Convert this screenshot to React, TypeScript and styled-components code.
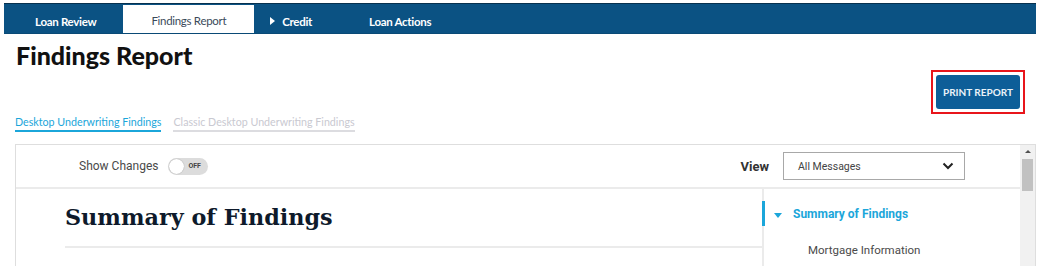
import React from 'react';
import styled, { createGlobalStyle } from 'styled-components';

const GlobalStyle = createGlobalStyle`
  html, body {
    margin: 0;
    padding: 0;
    background: #ffffff;
    height: 266px;
    overflow: hidden;
  }
  * {
    box-sizing: border-box;
  }
`;

const Page = styled.div`
  padding: 3px 7px 0 4px;
  font-family: Lato, 'Open Sans', sans-serif;
`;

const NavBar = styled.nav`
  display: flex;
  align-items: flex-end;
  height: 31px;
  background-color: #0b5283;
  border-top: 1px solid #07314f;
  border-bottom: 1px solid #0a4a76;
`;

const Tab = styled.div<{ $active?: boolean; $pl?: number; $pr?: number }>`
  display: flex;
  align-items: center;
  gap: 7px;
  height: ${(p) => (p.$active ? '28px' : '29px')};
  padding: ${(p) => (p.$active ? '3px' : '5px')} ${(p) => p.$pr ?? 27}px 0
    ${(p) => p.$pl ?? 31}px;
  background-color: ${(p) => (p.$active ? '#ffffff' : 'transparent')};
  color: ${(p) => (p.$active ? '#3b4a5a' : '#ffffff')};
  font-size: 11.5px;
  letter-spacing: -0.3px;
  font-weight: ${(p) => (p.$active ? 400 : 700)};
  white-space: nowrap;
`;

const Caret = styled.span`
  width: 0;
  height: 0;
  border-top: 4px solid transparent;
  border-bottom: 4px solid transparent;
  border-left: 5px solid #ffffff;
`;

const Header = styled.header`
  padding: 0 7px 0 12px;
`;

const Title = styled.h1`
  margin: 7px 0 0;
  font-size: 25px;
  line-height: 29px;
  font-weight: 900;
  color: #111111;
`;

const ActionRow = styled.div`
  display: flex;
  justify-content: flex-end;
  padding-right: 4px;
`;

const Highlight = styled.div`
  border: 2px solid #e8151b;
  padding: 3px;
`;

const PrintButton = styled.button`
  width: 84px;
  height: 34px;
  padding: 0;
  border: none;
  border-radius: 3px;
  background-color: #0d5e98;
  color: #eaf2f9;
  font-family: Lato, 'Open Sans', sans-serif;
  font-size: 10px;
  font-weight: 700;
  white-space: nowrap;
`;

const SubTabs = styled.div`
  display: flex;
  gap: 12px;
  padding-left: 11px;
  margin-top: 0;
`;

const SubTab = styled.div<{ $active?: boolean }>`
  padding-bottom: 1px;
  font-size: 10.7px;
  line-height: 15px;
  color: ${(p) => (p.$active ? '#1ba6da' : '#c9c9d1')};
  border-bottom: 2px solid ${(p) => (p.$active ? '#1ba6da' : '#dcdce0')};
`;

const Panel = styled.section`
  display: flex;
  margin: 12px 0 0 11px;
  border: 1px solid #dedede;
  height: 140px;
`;

const PanelMain = styled.div`
  flex: 1;
  display: flex;
  flex-direction: column;
`;

const Toolbar = styled.div`
  display: flex;
  align-items: center;
  justify-content: space-between;
  height: 44px;
  padding: 0 55px 0 63px;
  border-bottom: 2px solid #ebebeb;
  font-family: Roboto, 'Liberation Sans', sans-serif;
`;

const ToolGroup = styled.div`
  display: flex;
  align-items: center;
  gap: 10px;
`;

const ToolLabel = styled.span<{ $bold?: boolean }>`
  font-size: ${(p) => (p.$bold ? '13px' : '12px')};
  font-weight: ${(p) => (p.$bold ? 700 : 400)};
  color: ${(p) => (p.$bold ? '#333333' : '#4a4a4a')};
  margin-right: ${(p) => (p.$bold ? '4px' : '0')};
`;

const Toggle = styled.div`
  display: flex;
  align-items: center;
  width: 40px;
  height: 17px;
  border-radius: 9px;
  background-color: #dcdcdc;
  padding: 0 0 0 1px;
`;

const Knob = styled.span`
  width: 15px;
  height: 15px;
  border-radius: 50%;
  background-color: #ffffff;
  box-shadow: 0 0 1px rgba(0, 0, 0, 0.4);
`;

const ToggleText = styled.span`
  margin-left: 4px;
  font-size: 7px;
  font-weight: 700;
  color: #444444;
`;

const Select = styled.div`
  display: flex;
  align-items: center;
  justify-content: space-between;
  width: 182px;
  height: 28px;
  padding: 0 10px 0 14px;
  border: 1px solid #a8a8a8;
  font-size: 10.5px;
  color: #444444;
`;

const Body = styled.div`
  display: grid;
  grid-template-columns: 746px 1fr;
  flex: 1;
`;

const Content = styled.div`
  padding: 10px 0 0 49px;
`;

const SummaryTitle = styled.h2`
  margin: 0;
  padding-bottom: 11px;
  font-family: 'DejaVu Serif', 'Liberation Serif', serif;
  font-size: 22.3px;
  line-height: 36px;
  font-weight: 700;
  color: #0e1a2b;
  border-bottom: 2px solid #ebebeb;
`;

const Sidebar = styled.aside`
  border-left: 2px solid #ebebeb;
  font-family: Roboto, 'Liberation Sans', sans-serif;
`;

const SideItem = styled.div<{ $active?: boolean }>`
  display: flex;
  align-items: center;
  gap: 11px;
  height: 25px;
  margin: ${(p) => (p.$active ? '12px 0 0 -2px' : '11px 0 0 0')};
  padding-left: ${(p) => (p.$active ? '9px' : '44px')};
  border-left: ${(p) => (p.$active ? '3px solid #1ba6da' : 'none')};
  font-size: ${(p) => (p.$active ? '12px' : '11.5px')};
  font-weight: ${(p) => (p.$active ? 700 : 400)};
  color: ${(p) => (p.$active ? '#1ba6da' : '#4a4a4a')};
`;

const DownCaret = styled.span`
  width: 0;
  height: 0;
  margin-top: 3px;
  border-left: 4px solid transparent;
  border-right: 4px solid transparent;
  border-top: 5px solid #1ba6da;
`;

const Scrollbar = styled.div`
  display: flex;
  flex-direction: column;
  align-items: center;
  width: 15px;
  background-color: #f1f1f1;
  padding-top: 5px;
`;

const ScrollArrow = styled.span`
  width: 0;
  height: 0;
  border-left: 3px solid transparent;
  border-right: 3px solid transparent;
  border-bottom: 3px solid #505050;
`;

const Thumb = styled.span`
  width: 11px;
  height: 32px;
  margin-top: 6px;
  background-color: #c1c1c1;
`;

function Chevron() {
  return (
    <svg width="12" height="8" viewBox="0 0 12 8" fill="none">
      <path d="M1.5 1.5 L6 6 L10.5 1.5" stroke="#222" strokeWidth="2" />
    </svg>
  );
}

export default function App() {
  return (
    <Page>
      <GlobalStyle />
      <NavBar>
        <Tab>Loan Review</Tab>
        <Tab $active $pl={28} $pr={28}>
          Findings Report
        </Tab>
        <Tab $pl={16} $pr={28}>
          <Caret />
          Credit
        </Tab>
        <Tab $pl={29}>Loan Actions</Tab>
      </NavBar>
      <Header>
        <Title>Findings Report</Title>
        <ActionRow>
          <Highlight>
            <PrintButton>PRINT REPORT</PrintButton>
          </Highlight>
        </ActionRow>
      </Header>
      <SubTabs>
        <SubTab $active>Desktop Underwriting Findings</SubTab>
        <SubTab>Classic Desktop Underwriting Findings</SubTab>
      </SubTabs>
      <Panel>
        <PanelMain>
          <Toolbar>
            <ToolGroup>
              <ToolLabel>Show Changes</ToolLabel>
              <Toggle>
                <Knob />
                <ToggleText>OFF</ToggleText>
              </Toggle>
            </ToolGroup>
            <ToolGroup>
              <ToolLabel $bold>View</ToolLabel>
              <Select>
                All Messages
                <Chevron />
              </Select>
            </ToolGroup>
          </Toolbar>
          <Body>
            <Content>
              <SummaryTitle>Summary of Findings</SummaryTitle>
            </Content>
            <Sidebar>
              <SideItem $active>
                <DownCaret />
                Summary of Findings
              </SideItem>
              <SideItem>Mortgage Information</SideItem>
            </Sidebar>
          </Body>
        </PanelMain>
        <Scrollbar>
          <ScrollArrow />
          <Thumb />
        </Scrollbar>
      </Panel>
    </Page>
  );
}
